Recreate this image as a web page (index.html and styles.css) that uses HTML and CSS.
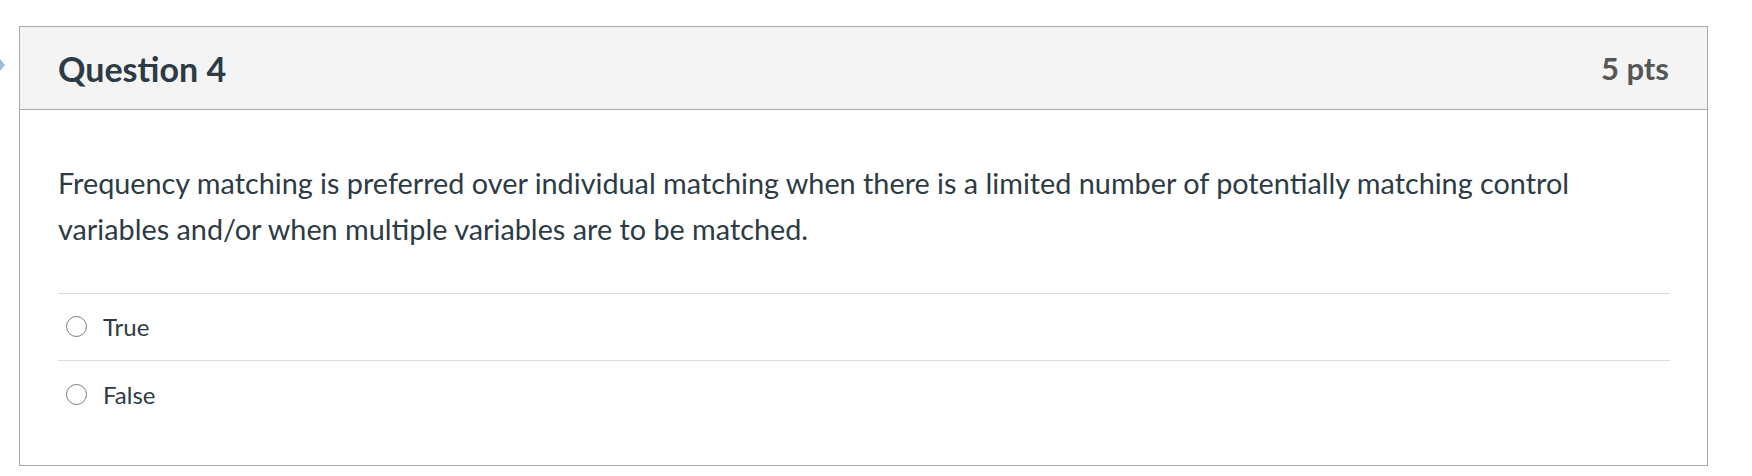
FILE: index.html
```html
<!DOCTYPE html>
<html lang="en">
<head>
<meta charset="utf-8">
<title>Question 4</title>
<link rel="stylesheet" href="styles.css">
</head>
<body>
<span class="edge-marker" aria-hidden="true">
  <svg width="6" height="14" viewBox="0 0 6 14"><path d="M0 1 L5 7 L0 13 Z" fill="#9dbbe0"/></svg>
</span>
<div class="card">
  <div class="card-header">
    <h2 class="q-title">Question 4</h2>
    <span class="q-points">5 pts</span>
  </div>
  <div class="card-body">
    <p class="q-text">Frequency matching is preferred over individual matching when there is a limited number of potentially matching control variables and/or when multiple variables are to be matched.</p>
    <div class="answers">
      <label class="answer"><span class="radio"></span><span class="answer-label">True</span></label>
      <label class="answer"><span class="radio"></span><span class="answer-label">False</span></label>
    </div>
  </div>
</div>
</body>
</html>
```
FILE: styles.css
```css
html, body {
  margin: 0;
  padding: 0;
  background: #ffffff;
}
body {
  font-family: Lato, "Noto Sans", sans-serif;
  color: #2d3b45;
  position: relative;
  padding-top: 26px;
  padding-left: 19px;
}
.edge-marker {
  position: absolute;
  left: 0;
  top: 58px;
  display: block;
  line-height: 0;
}
.card {
  width: 1689px;
  box-sizing: border-box;
  border: 1px solid #a9a9a9;
  background: #fff;
}
.card-header {
  height: 82px;
  background: #f4f4f4;
  border-bottom: 1px solid #a9a9a9;
  display: flex;
  align-items: center;
  justify-content: space-between;
  padding: 0 38px;
}
.q-title {
  margin: 0;
  font-size: 34px;
  font-weight: 700;
  color: #2d3b45;
}
.q-points {
  font-size: 31px;
  font-weight: 700;
  color: #565656;
}
.card-body {
  padding: 50px 37px 38px 38px;
}
.q-text {
  margin: 0 0 41px 0;
  font-size: 28.8px;
  line-height: 46px;
  color: #2d3b45;
}
.answers {
  display: flex;
  flex-direction: column;
}
.answer {
  display: flex;
  align-items: center;
  height: 66px;
  border-top: 1px solid #dcdcdc;
  padding-left: 8px;
  gap: 16px;
}
.answer:first-child {
  padding-bottom: 2px;
  height: 64px;
}
.radio {
  width: 21px;
  height: 21px;
  box-sizing: border-box;
  border: 1.5px solid #7a7a7a;
  border-radius: 50%;
  background: #fff;
  flex: none;
}
.answer-label {
  font-size: 24px;
  color: #2d3b45;
}
```
